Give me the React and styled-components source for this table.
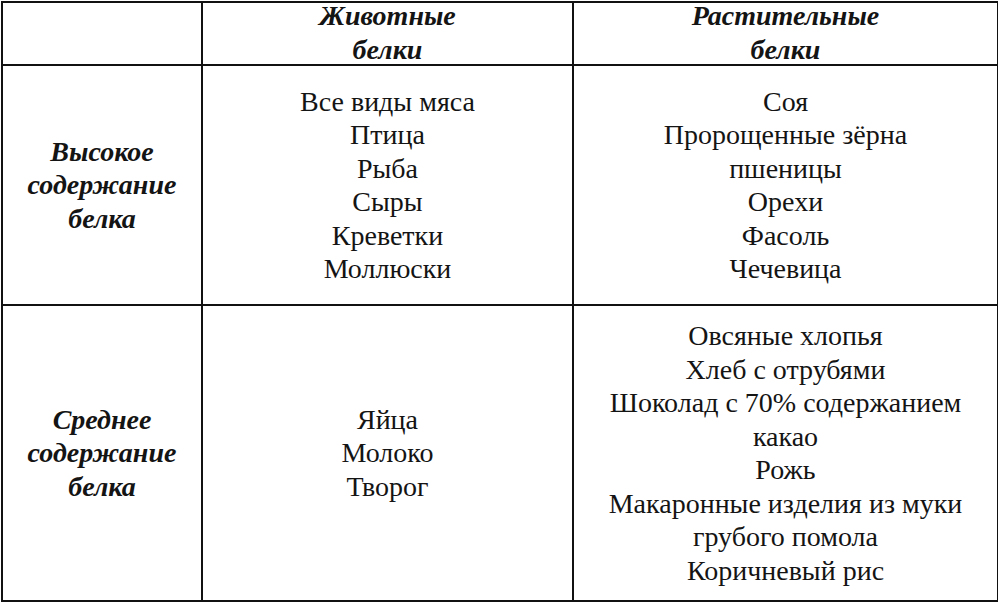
import styled, { createGlobalStyle } from 'styled-components';

const GlobalStyle = createGlobalStyle`
  html, body {
    margin: 0;
    padding: 0;
    background: #fff;
  }
`;

const Page = styled.div`
  width: 998px;
  height: 602px;
  padding: 1px 0 0 1px;
  box-sizing: border-box;
  background: #fff;
  overflow: hidden;
`;

const Table = styled.table`
  border-collapse: collapse;
  table-layout: fixed;
  width: 996px;
`;

const Row = styled.tr`
  height: ${(p) => p.$h}px;
`;

const Cell = styled.td`
  border: 2px solid #111;
  text-align: center;
  vertical-align: middle;
  padding: 0;
  color: #141414;
`;

const LineBox = styled.div`
  margin: ${(p) => (p.$tight ? '-4px 0 -2px' : '0')};
  line-height: 33.5px;
`;

const Line = styled.div`
  font-size: 28px;
  font-family: "Liberation Serif", "Times New Roman", serif;
  font-weight: ${(p) => (p.$head ? 700 : 400)};
  font-style: ${(p) => (p.$head ? 'italic' : 'normal')};
`;

const Lines = ({ items, tight, head }) => (
  <LineBox $tight={tight}>
    {items.map((t) => (
      <Line key={t} $head={head}>
        {t}
      </Line>
    ))}
  </LineBox>
);

const rows = [
  {
    h: 240,
    label: ['Высокое', 'содержание', 'белка'],
    animal: ['Все виды мяса', 'Птица', 'Рыба', 'Сыры', 'Креветки', 'Моллюски'],
    plant: ['Соя', 'Пророщенные зёрна', 'пшеницы', 'Орехи', 'Фасоль', 'Чечевица'],
  },
  {
    h: 296,
    label: ['Среднее', 'содержание', 'белка'],
    animal: ['Яйца', 'Молоко', 'Творог'],
    plant: [
      'Овсяные хлопья',
      'Хлеб с отрубями',
      'Шоколад с 70% содержанием',
      'какао',
      'Рожь',
      'Макаронные изделия из муки',
      'грубого помола',
      'Коричневый рис',
    ],
  },
];

export default function App() {
  return (
    <Page>
      <GlobalStyle />
      <Table>
        <colgroup>
          <col style={{ width: 200 }} />
          <col style={{ width: 371 }} />
          <col style={{ width: 425 }} />
        </colgroup>
        <tbody>
          <Row $h={63}>
            <Cell />
            <Cell>
              <Lines tight head items={['Животные', 'белки']} />
            </Cell>
            <Cell>
              <Lines tight head items={['Растительные', 'белки']} />
            </Cell>
          </Row>
          {rows.map((r) => (
            <Row key={r.label[0]} $h={r.h}>
              <Cell>
                <Lines head items={r.label} />
              </Cell>
              <Cell>
                <Lines items={r.animal} />
              </Cell>
              <Cell>
                <Lines items={r.plant} />
              </Cell>
            </Row>
          ))}
        </tbody>
      </Table>
    </Page>
  );
}
